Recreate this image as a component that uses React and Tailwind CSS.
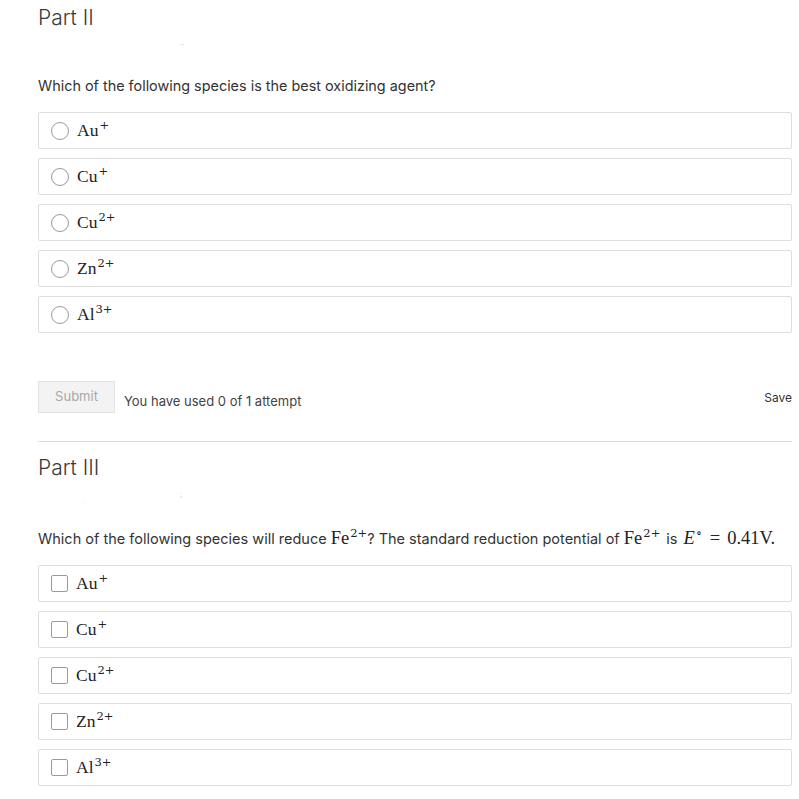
import React from 'react';

const serif = { fontFamily: '"Liberation Serif", "DejaVu Serif", serif' };
const supFont = { fontFamily: '"DejaVu Serif", "Liberation Serif", serif' };

const Sup = ({ children }) => (
  <sup style={supFont} className="text-[11.5px] relative -top-[7px] ml-[1px]">{children}</sup>
);

const Sp = ({ base, sup }) => (
  <span style={serif} className="text-[17.5px] text-[#222]">
    {base}
    <Sup>{sup}</Sup>
  </span>
);

const species = [
  ['Au', '+'],
  ['Cu', '+'],
  ['Cu', '2+'],
  ['Zn', '2+'],
  ['Al', '3+'],
];

const Option = ({ kind, base, sup }) => (
  <label className="flex items-center h-[37px] border border-[#dedede] rounded-[2px] pl-[12px] bg-white">
    {kind === 'radio' ? (
      <span className="w-[18px] h-[18px] rounded-full border border-[#9a9a9a] bg-white"></span>
    ) : (
      <span className="w-[17px] h-[17px] rounded-[2px] border border-[#9a9a9a] bg-white"></span>
    )}
    <span className="ml-[8px] leading-none">
      <Sp base={base} sup={sup} />
    </span>
  </label>
);

const Heading = ({ children }) => (
  <h2 className="text-[21px] leading-[24px] font-light text-[#3a3a3a]">{children}</h2>
);

export default function App() {
  return (
    <div
      className="w-[799px] min-h-[799px] bg-white text-[#333] pl-[38px] pr-[7px] pt-[6px]"
      style={{ fontFamily: 'Inter, "Noto Sans", sans-serif' }}
    >
      <Heading>Part II</Heading>
      <div className="h-[46px] relative">
        <span className="absolute left-[142px] top-[8px] text-[7px] text-[#bbb]">‥</span>
      </div>
      <p className="text-[14.4px] leading-[20px] text-[#333]">
        Which of the following species is the best oxidizing agent?
      </p>
      <div className="mt-[16px] flex flex-col gap-[9px]">
        {species.map(([b, s], i) => (
          <Option key={i} kind="radio" base={b} sup={s} />
        ))}
      </div>

      <div className="mt-[48px] flex items-center">
        <button className="h-[32px] w-[77px] bg-[#f3f3f3] border border-[#e2e2e2] text-[13px] text-[#a8a8a8]">
          Submit
        </button>
        <span className="ml-[9px] mt-[10px] text-[13px] text-[#444]">You have used 0 of 1 attempt</span>
        <span className="ml-auto mt-[1px] text-[12px] text-[#333]">Save</span>
      </div>

      <div className="mt-[28px] border-t border-[#dcdcdc]"></div>

      <div className="mt-[14px]">
        <Heading>Part III</Heading>
      </div>
      <div className="h-[48px] relative">
        <span className="absolute left-[44px] top-[16px] text-[6px] text-[#bbb]">.</span>
        <span className="absolute left-[142px] top-[10px] text-[7px] text-[#bbb]">⁏</span>
      </div>
      <p className="text-[14.5px] leading-[20px] h-[20px] text-[#333] whitespace-nowrap">
        Which of the following species will reduce{' '}
        <span style={serif} className="text-[18.5px] text-[#222]">
          Fe<Sup>2+</Sup>
        </span>
        ? The standard reduction potential of{' '}
        <span style={serif} className="text-[18.5px] text-[#222] mr-[2px]">
          Fe<Sup>2+</Sup>
        </span>{' '}
        is{' '}
        <span style={serif} className="text-[18.5px] text-[#222] ml-[2px]">
          <i>E</i>
          <sup style={supFont} className="text-[12px] relative -top-[7px] ml-[1px]">∘</sup>
          <span className="ml-[8px]">=</span>
          <span className="ml-[7px]">0.41V.</span>
        </span>
      </p>
      <div className="mt-[17px] flex flex-col gap-[9px] pb-[10px]">
        {species.map(([b, s], i) => (
          <Option key={i} kind="check" base={b} sup={s} />
        ))}
      </div>
    </div>
  );
}
